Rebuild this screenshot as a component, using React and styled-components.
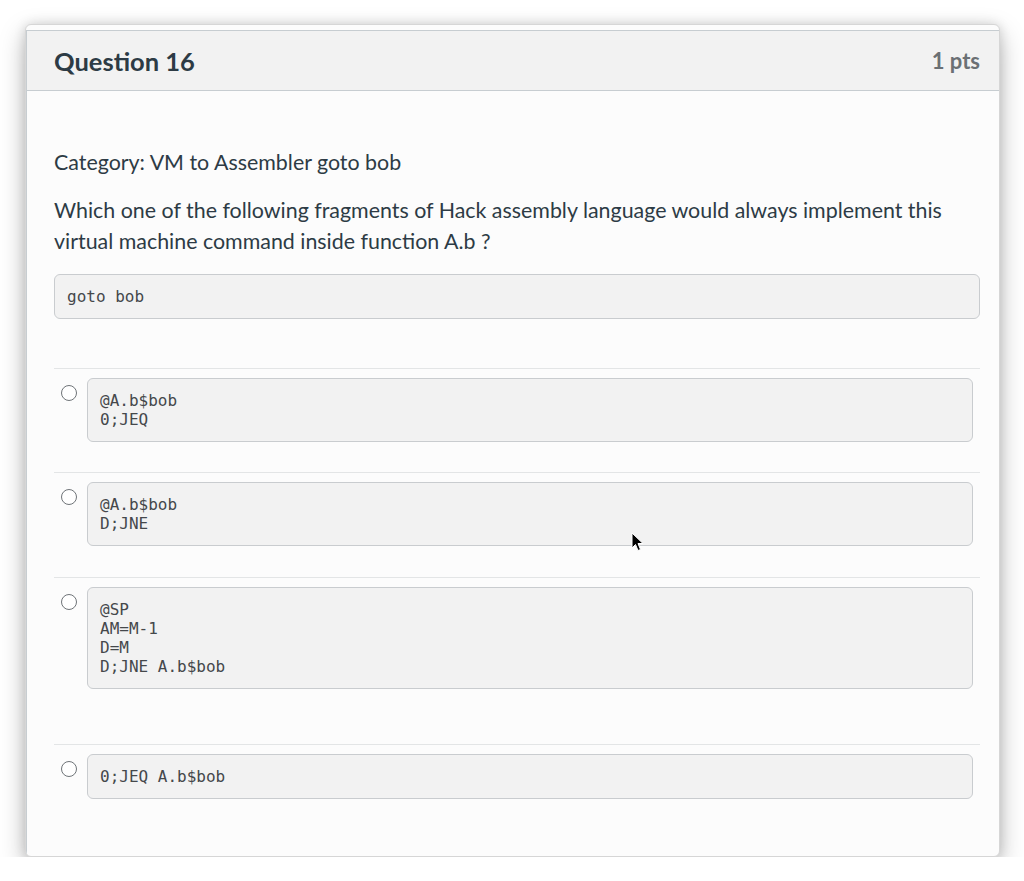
import React from "react";
import styled, { createGlobalStyle } from "styled-components";

const GlobalStyle = createGlobalStyle`
  html, body {
    margin: 0;
    padding: 0;
    background: #ffffff;
  }
  body {
    font-family: Lato, "Liberation Sans", sans-serif;
  }
`;

const Window = styled.div`
  position: relative;
  box-sizing: border-box;
  margin: 24px 0 0 25px;
  width: 975px;
  height: 833px;
  padding-top: 5px;
  background: #fcfcfc;
  border: 1px solid #d6d6d6;
  border-radius: 6px;
  box-shadow: 0 10px 26px rgba(0, 0, 0, 0.26), 0 0 12px rgba(0, 0, 0, 0.14);
  overflow: hidden;
`;

const Card = styled.div`
  border-top: 1px solid #c7cdd1;
  border-left: 1px solid #c7cdd1;
  height: 100%;
`;

const Header = styled.div`
  display: flex;
  align-items: center;
  justify-content: space-between;
  height: 59px;
  padding: 0 19px 0 27px;
  background: #f2f2f2;
  border-bottom: 1px solid #c7cdd1;
`;

const Title = styled.h2`
  margin: 0;
  font-size: 25.5px;
  font-weight: 700;
  color: #2d3b45;
`;

const Points = styled.span`
  font-size: 22px;
  font-weight: 700;
  color: #6b7074;
`;

const Body = styled.div`
  padding: 56px 19px 0 27px;
  color: #2d3b45;
`;

const Text = styled.p`
  margin: 0 0 17px;
  font-size: 21.4px;
  line-height: 31px;
`;

const Code = styled.pre`
  box-sizing: border-box;
  margin: 0;
  flex: 1;
  padding: 12px;
  background: #f2f2f2;
  border: 1px solid #c9cccf;
  border-radius: 6px;
  font-family: "DejaVu Sans Mono", "Liberation Mono", monospace;
  font-size: 16px;
  line-height: 19px;
  color: #45484b;
  white-space: pre;
`;

const Answers = styled.div`
  margin-top: 49px;
`;

const Answer = styled.div`
  display: flex;
  align-items: flex-start;
  gap: 10px;
  padding: 9px 7px ${(p) => p.bottom}px 7px;
  border-top: 1px solid #e3e5e6;
`;

const Radio = styled.span`
  box-sizing: border-box;
  flex: none;
  width: 16px;
  height: 16px;
  margin-top: 7px;
  border: 1.5px solid #6f7478;
  border-radius: 50%;
  background: #ffffff;
`;

const Cursor = styled.svg`
  position: absolute;
  left: 605px;
  top: 507px;
`;

const answers = [
  { code: "@A.b$bob\n0;JEQ", bottom: 30 },
  { code: "@A.b$bob\nD;JNE", bottom: 31 },
  { code: "@SP\nAM=M-1\nD=M\nD;JNE A.b$bob", bottom: 55 },
  { code: "0;JEQ A.b$bob", bottom: 30 },
];

export default function App() {
  return (
    <>
      <GlobalStyle />
      <Window>
        <Card>
          <Header>
            <Title>Question 16</Title>
            <Points>1 pts</Points>
          </Header>
          <Body>
            <Text>Category: VM to Assembler goto bob</Text>
            <Text>
              Which one of the following fragments of Hack assembly language
              would always implement this virtual machine command inside
              function A.b ?
            </Text>
            <Code>goto bob</Code>
            <Answers>
              {answers.map((a, i) => (
                <Answer key={i} bottom={a.bottom}>
                  <Radio />
                  <Code>{a.code}</Code>
                </Answer>
              ))}
            </Answers>
          </Body>
        </Card>
        <Cursor width="14" height="20" viewBox="0 0 14 20">
          <path
            d="M1 1 L1 16 L4.5 12.5 L7 18.5 L9.5 17.5 L7 11.5 L12 11.5 Z"
            fill="#000"
            stroke="#fff"
            strokeWidth="1"
          />
        </Cursor>
      </Window>
    </>
  );
}
